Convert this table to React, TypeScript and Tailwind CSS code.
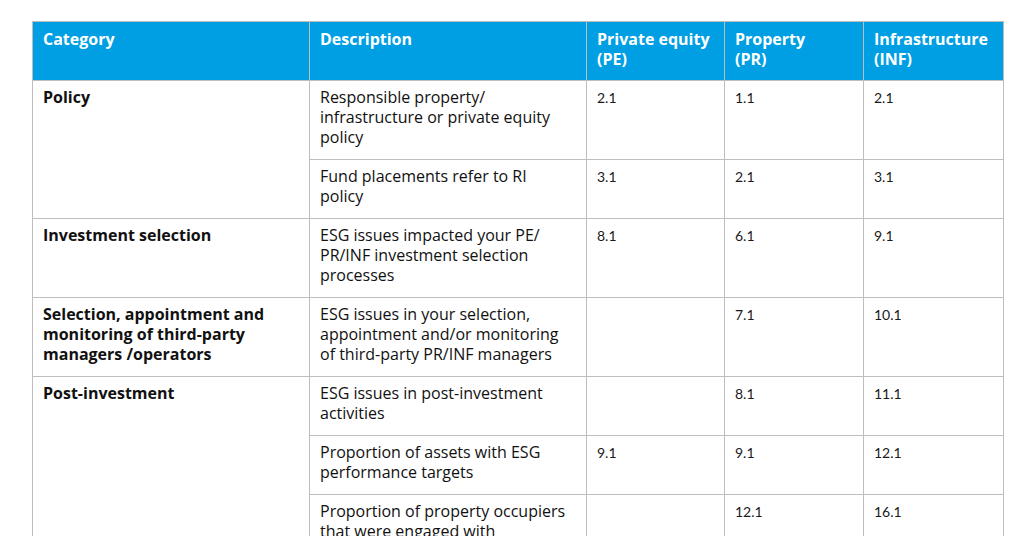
const ROWS = [
  { category: ['Policy'], span: 2, description: ['Responsible property/', 'infrastructure or private equity', 'policy'], pe: '2.1', pr: '1.1', inf: '2.1' },
  { description: ['Fund placements refer to RI', 'policy'], pe: '3.1', pr: '2.1', inf: '3.1' },
  { category: ['Investment selection'], span: 1, description: ['ESG issues impacted your PE/', 'PR/INF investment selection', 'processes'], pe: '8.1', pr: '6.1', inf: '9.1' },
  { category: ['Selection, appointment and', 'monitoring of third-party', 'managers /operators'], span: 1, description: ['ESG issues in your selection,', 'appointment and/or monitoring', 'of third-party PR/INF managers'], pe: '', pr: '7.1', inf: '10.1' },
  { category: ['Post-investment'], span: 3, description: ['ESG issues in post-investment', 'activities'], pe: '', pr: '8.1', inf: '11.1' },
  { description: ['Proportion of assets with ESG', 'performance targets'], pe: '9.1', pr: '9.1', inf: '12.1' },
  { description: ['Proportion of property occupiers', 'that were engaged with', 'tenants on ESG issues'], pe: '', pr: '12.1', inf: '16.1' },
]

const HEADERS = [['Category'], ['Description'], ['Private equity', '(PE)'], ['Property', '(PR)'], ['Infrastructure', '(INF)']]

const cell = 'border border-[#bdbdbd] align-top pl-[10px] pr-1 pt-[6px] pb-[12px]'
const num = 'font-["Lato",sans-serif] text-[14px] leading-[20px] text-[#1a1a1a]'

function Lines({ lines }: { lines: string[] }) {
  return (
    <>
      {lines.map((l, i) => (
        <div key={i} className="whitespace-nowrap">{l}</div>
      ))}
    </>
  )
}

export default function App() {
  return (
    <div className='h-[536px] overflow-hidden bg-white font-["Open_Sans",sans-serif] text-[16px] leading-[20px] text-[#111]'>
      <div className="pt-[21px] pl-[32px]">
        <table className="border-collapse table-fixed w-[971px]">
          <colgroup>
            <col className="w-[277px]" />
            <col className="w-[277px]" />
            <col className="w-[138px]" />
            <col className="w-[139px]" />
            <col className="w-[140px]" />
          </colgroup>
          <thead>
            <tr className="bg-[#009fe3] text-white text-left">
              {HEADERS.map((h, i) => (
                <th key={i} className={`border border-[#bdbdbd] ${i > 0 ? 'border-l-[#e6f5fc]' : ''} align-top pl-[10px] pr-1 pt-[7px] pb-[11px] font-bold h-[58px]`}>
                  <Lines lines={h} />
                </th>
              ))}
            </tr>
          </thead>
          <tbody>
            {ROWS.map((r, i) => (
              <tr key={i}>
                {r.category && (
                  <td rowSpan={r.span} className={`${cell} font-bold`}><Lines lines={r.category} /></td>
                )}
                <td className={cell}><Lines lines={r.description} /></td>
                <td className={cell}><span className={num}>{r.pe}</span></td>
                <td className={cell}><span className={num}>{r.pr}</span></td>
                <td className={cell}><span className={num}>{r.inf}</span></td>
              </tr>
            ))}
          </tbody>
        </table>
      </div>
    </div>
  )
}
